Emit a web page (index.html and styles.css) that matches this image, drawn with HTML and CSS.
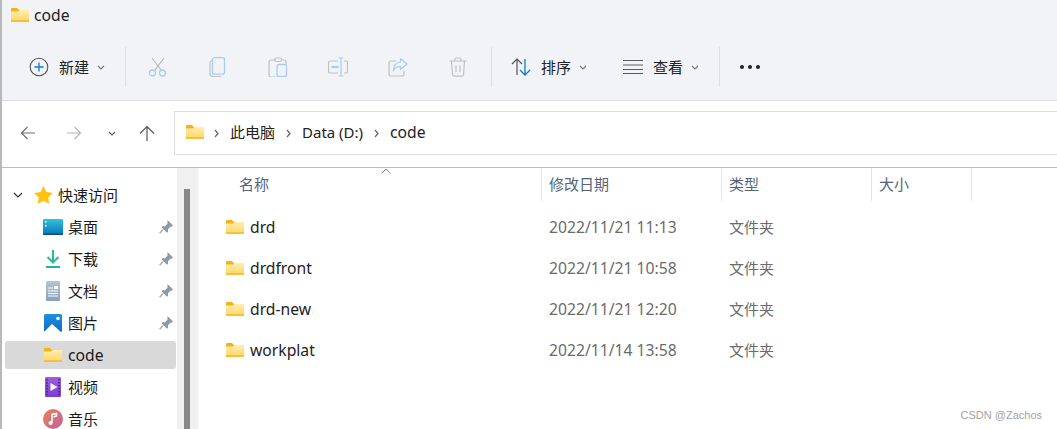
FILE: index.html
```html
<!DOCTYPE html>
<html lang="zh-CN">
<head>
<meta charset="utf-8">
<title>code</title>
<link rel="stylesheet" href="styles.css">
</head>
<body>
<svg class="defs" width="0" height="0" aria-hidden="true">
  <defs>
    <linearGradient id="fg" x1="0" y1="0" x2="0" y2="1"><stop offset="0" stop-color="#ffeeb0"/><stop offset="1" stop-color="#ffd86b"/></linearGradient>
    <linearGradient id="dg" x1="0" y1="0" x2="0" y2="1"><stop offset="0" stop-color="#2fc3dd"/><stop offset="1" stop-color="#0f76b8"/></linearGradient>
    <linearGradient id="dl" x1="0" y1="0" x2="0" y2="1"><stop offset="0" stop-color="#38c08a"/><stop offset="1" stop-color="#1fb5a0"/></linearGradient>
    <linearGradient id="dc" x1="0" y1="0" x2="0" y2="1"><stop offset="0" stop-color="#b4c5d9"/><stop offset="1" stop-color="#86a0bf"/></linearGradient>
    <linearGradient id="pc" x1="0" y1="0" x2="0" y2="1"><stop offset="0" stop-color="#1f8fe0"/><stop offset="1" stop-color="#0f6cc4"/></linearGradient>
    <linearGradient id="vd" x1="0" y1="0" x2="0" y2="1"><stop offset="0" stop-color="#a05ee0"/><stop offset="1" stop-color="#7a3fd0"/></linearGradient>
    <linearGradient id="mu" x1="0" y1="0" x2="1" y2="1"><stop offset="0" stop-color="#e8855a"/><stop offset="1" stop-color="#c0609a"/></linearGradient>
    <symbol id="folder" viewBox="0 0 18 14">
      <path d="M0 1a1 1 0 0 1 1-1h5l2 2h10v12H0z" fill="#f5b31a"/>
      <path d="M0 3.500h7l1.500-1.500H18v10.500H0z" fill="url(#fg)"/>
      <path d="M0 12.500h18V14H0z" fill="#f4bd3a"/>
    </symbol>
    <symbol id="pin" viewBox="0 0 14 14">
      <path d="M8.500 0l5.500 5.500-1.500 1.200-1 0-2.500 2.500 0 2.500-1 1-5.500-5.500 1-1 2.500 0 2.500-2.500 0-1z" fill="#8d9aa5"/>
      <path d="M4 9.500L.7 13.300" stroke="#a9b2ba" stroke-width="1.600" fill="none"/>
    </symbol>
    <symbol id="chev" viewBox="0 0 8 5">
      <path d="M1 1l3 3 3-3" fill="none" stroke="currentColor" stroke-width="1.100"/>
    </symbol>
    <symbol id="crumb" viewBox="0 0 5 9">
      <path d="M1 1l3 3.500-3 3.500" fill="none" stroke="#666" stroke-width="1.300"/>
    </symbol>
  </defs>
</svg>

<div class="window">
  <div class="edge"></div>
  <header class="top">
    <div class="title">
      <svg class="folder"><use href="#folder"/></svg>
      <span class="lat">code</span>
    </div>
    <div class="toolbar">
      <div class="tool tool-new">
        <svg class="ic20" viewBox="0 0 20 20"><circle cx="10" cy="10" r="8.800" fill="none" stroke="#555" stroke-width="1.100"/><path d="M10 5.500v9M5.500 10h9" stroke="#0a7cd8" stroke-width="1.300"/></svg>
        <span class="tool-label">新建</span>
        <svg class="chev"><use href="#chev"/></svg>
      </div>
      <i class="sep"></i>
      <div class="icon-btn"><svg class="ic20" viewBox="0 0 20 20"><path d="M4 1l9 12M16 1L7 13" stroke="#b5b5b5" stroke-width="1.100" fill="none"/><circle cx="4.500" cy="16" r="3" fill="none" stroke="#a9cdf0" stroke-width="1.300"/><circle cx="14.500" cy="16" r="3" fill="none" stroke="#a9cdf0" stroke-width="1.300"/></svg></div>
      <div class="icon-btn"><svg class="ic20" viewBox="0 0 20 20"><path d="M4 3.500C2.500 4 2 5 2 6v10c0 2 1.500 3.500 3.500 3.500H13" fill="none" stroke="#c2c2c2" stroke-width="1.200"/><rect x="4.500" y="0.700" width="12" height="16.500" rx="2" fill="none" stroke="#a9cdf0" stroke-width="1.300"/></svg></div>
      <div class="icon-btn"><svg class="ic20" viewBox="0 0 20 20"><path d="M8 3H3a2 2 0 0 0-2 2v13a2 2 0 0 0 2 2h5M14 3h2a2 2 0 0 1 2 2v2" fill="none" stroke="#c2c2c2" stroke-width="1.200"/><rect x="6.500" y="1" width="7" height="3.500" rx="1.500" fill="none" stroke="#c2c2c2" stroke-width="1.200"/><rect x="9" y="7.500" width="9.500" height="12" rx="1.500" fill="none" stroke="#a9cdf0" stroke-width="1.300"/></svg></div>
      <div class="icon-btn"><svg class="ic20" viewBox="0 0 20 20"><path d="M10 4H2a1.500 1.500 0 0 0-1.500 1.500v9A1.500 1.500 0 0 0 2 16h8M16 4h2a1.500 1.500 0 0 1 1.500 1.500v9A1.500 1.500 0 0 1 18 16h-2" fill="none" stroke="#c2c2c2" stroke-width="1.200"/><path d="M3.500 10h7" stroke="#a9cdf0" stroke-width="2.200"/><path d="M13 1v18M10.500 1h5M10.500 19h5" stroke="#a9cdf0" stroke-width="1.200" fill="none"/></svg></div>
      <div class="icon-btn"><svg class="ic20" viewBox="0 0 20 20"><path d="M8 4H3a2 2 0 0 0-2 2v11a2 2 0 0 0 2 2h11a2 2 0 0 0 2-2v-3" fill="none" stroke="#c2c2c2" stroke-width="1.200"/><path d="M12.500 1.500l6.500 5.500-6.500 5.500V9.500C9 9.500 6.500 11 5.500 14c0-5 2.500-8.500 7-9z" fill="none" stroke="#a9cdf0" stroke-width="1.200" stroke-linejoin="round"/></svg></div>
      <div class="icon-btn"><svg class="ic20" viewBox="0 0 20 20"><path d="M1.500 4h17M7 4V2.500A1.500 1.500 0 0 1 8.500 1h3A1.500 1.500 0 0 1 13 2.500V4M3.500 4l1 13.500A1.800 1.800 0 0 0 6.300 19.200h7.400a1.800 1.800 0 0 0 1.800-1.700L16.500 4M8 8.500v6.500M12 8.500v6.500" fill="none" stroke="#c2c2c2" stroke-width="1.200"/></svg></div>
      <i class="sep sep-b"></i>
      <div class="tool tool-sort">
        <svg class="ic20" viewBox="0 0 20 20"><path d="M6 18V2M1 7l5-5 5 5" fill="none" stroke="#555" stroke-width="1.200"/><path d="M14 2v16M9 13l5 5 5-5" fill="none" stroke="#0a7cd8" stroke-width="1.300"/></svg>
        <span class="tool-label">排序</span>
        <svg class="chev"><use href="#chev"/></svg>
      </div>
      <div class="tool tool-view">
        <svg class="ic20" viewBox="0 0 20 20"><path d="M0 3.500h20M0 8h20M0 12.500h20M0 16.500h20" stroke="#5c5c5c" stroke-width="1.200"/></svg>
        <span class="tool-label">查看</span>
        <svg class="chev"><use href="#chev"/></svg>
      </div>
      <i class="sep sep-c"></i>
      <div class="dots"><b></b><b></b><b></b></div>
    </div>
  </header>

  <nav class="navbar">
    <svg class="nav-ic back" viewBox="0 0 16 14"><path d="M15 7H1.500M7.500 1l-6 6 6 6" fill="none" stroke="#6e6e6e" stroke-width="1.200"/></svg>
    <svg class="nav-ic fwd" viewBox="0 0 16 14"><path d="M1 7h13.500M8.500 1l6 6-6 6" fill="none" stroke="#b4b4b4" stroke-width="1.200"/></svg>
    <svg class="chev nav-chev"><use href="#chev"/></svg>
    <svg class="nav-up" viewBox="0 0 16 16"><path d="M8 16V1.500M1 8.500l7-7 7 7" fill="none" stroke="#555" stroke-width="1.200"/></svg>
    <div class="address">
      <svg class="folder"><use href="#folder"/></svg>
      <svg class="crumb"><use href="#crumb"/></svg>
      <span class="crumb-text">此电脑</span>
      <svg class="crumb"><use href="#crumb"/></svg>
      <span class="crumb-text">Data (D:)</span>
      <svg class="crumb"><use href="#crumb"/></svg>
      <span class="crumb-text lat">code</span>
    </div>
  </nav>

  <main class="main">
    <aside class="side">
      <ul class="tree">
        <li class="tree-row head">
          <svg class="head-chev" viewBox="0 0 10 6"><path d="M1 1l4 4 4-4" fill="none" stroke="#333" stroke-width="1.200"/></svg>
          <svg class="star" viewBox="0 0 20 19"><path d="M10 0l3 6.400 7 .9-5.100 4.800 1.300 6.900L10 15.600 3.800 19l1.300-6.900L0 7.300l7-.9z" fill="#ffc20e"/></svg>
          <span>快速访问</span>
        </li>
        <li class="tree-row">
          <svg class="tree-ic" viewBox="0 0 20 16"><rect width="20" height="15.500" rx="1" fill="url(#dg)"/><rect y="14.500" width="20" height="1.500" fill="#0d4f80"/><rect x="2" y="2" width="1.500" height="1.500" fill="#fff"/><rect x="2" y="6" width="1.500" height="1.500" fill="#fff"/></svg>
          <span>桌面</span>
          <svg class="pin"><use href="#pin"/></svg>
        </li>
        <li class="tree-row">
          <svg class="tree-ic" viewBox="0 0 20 20"><path d="M10 1v12M4.500 8l5.500 5.500L15.500 8" fill="none" stroke="#2cbb96" stroke-width="2"/><path d="M3 18h14" stroke="#1fb5a0" stroke-width="2"/></svg>
          <span>下载</span>
          <svg class="pin"><use href="#pin"/></svg>
        </li>
        <li class="tree-row">
          <svg class="tree-ic" viewBox="0 0 20 20"><rect x="3" width="14" height="20" rx="1" fill="url(#dc)"/><path d="M5 7h5M5 10h10M5 12.500h10M5 15h10" stroke="#fff" stroke-width="1"/><rect x="11" y="5" width="4" height="3" fill="#fff"/></svg>
          <span>文档</span>
          <svg class="pin"><use href="#pin"/></svg>
        </li>
        <li class="tree-row">
          <svg class="tree-ic" viewBox="0 0 20 20"><rect x="1" y="1" width="18" height="18" rx="1.500" fill="url(#pc)"/><path d="M1 19l8-8 9 8z" fill="#fff"/><circle cx="15" cy="5.500" r="1.800" fill="#fff"/></svg>
          <span>图片</span>
          <svg class="pin"><use href="#pin"/></svg>
        </li>
        <li class="tree-row active">
          <svg class="folder"><use href="#folder"/></svg>
          <span class="lat">code</span>
        </li>
        <li class="tree-row">
          <svg class="tree-ic" viewBox="0 0 20 20"><rect x="2" width="16" height="20" rx="1" fill="url(#vd)"/><path d="M7.500 6l7 4-7 4z" fill="#fff"/><path d="M4 2v16M16 2v16" stroke="#3d1d8c" stroke-width="1.500" stroke-dasharray="1.500 1.500"/></svg>
          <span>视频</span>
        </li>
        <li class="tree-row">
          <svg class="tree-ic" viewBox="0 0 20 20"><circle cx="10" cy="10" r="10" fill="url(#mu)"/><path d="M9 14V5.500l4.500-1V7L10.500 8" fill="none" stroke="#fff" stroke-width="1.600"/><circle cx="7.500" cy="14" r="2" fill="#fff"/></svg>
          <span>音乐</span>
        </li>
      </ul>
      <div class="track"><div class="thumb"></div></div>
    </aside>

    <section class="list">
      <div class="cols col-head">
        <div class="col-h col-name">名称<svg class="sort-caret" viewBox="0 0 10 6"><path d="M.5 5.500L5 1l4.500 4.500" fill="none" stroke="#888" stroke-width="1"/></svg></div>
        <div class="col-h col-date">修改日期</div>
        <div class="col-h col-type">类型</div>
        <div class="col-h col-size">大小</div>
      </div>
      <div class="cols row">
        <div class="cell-name"><svg class="folder"><use href="#folder"/></svg><span>drd</span></div>
        <div class="cell cell-date">2022/11/21 11:13</div>
        <div class="cell">文件夹</div>
      </div>
      <div class="cols row">
        <div class="cell-name"><svg class="folder"><use href="#folder"/></svg><span>drdfront</span></div>
        <div class="cell cell-date">2022/11/21 10:58</div>
        <div class="cell">文件夹</div>
      </div>
      <div class="cols row">
        <div class="cell-name"><svg class="folder"><use href="#folder"/></svg><span>drd-new</span></div>
        <div class="cell cell-date">2022/11/21 12:20</div>
        <div class="cell">文件夹</div>
      </div>
      <div class="cols row">
        <div class="cell-name"><svg class="folder"><use href="#folder"/></svg><span>workplat</span></div>
        <div class="cell cell-date">2022/11/14 13:58</div>
        <div class="cell">文件夹</div>
      </div>
    </section>
  </main>
  <div class="watermark">CSDN @Zachos</div>
</div>
</body>
</html>
```

FILE: styles.css
```css
* { box-sizing: border-box; }
html, body { margin: 0; height: 100%; overflow: hidden; }
body {
  background: #fff;
  color: #1a1a1a;
  font: 15px/20px "Noto Sans", "Noto Sans CJK SC", sans-serif;
}
.defs { position: absolute; }
svg { display: block; flex: none; }
ul { list-style: none; margin: 0; padding: 0; }
.lat { font-size: 15.700px; }

.window {
  position: relative;
  height: 429px;
  border-left: 2px solid #b9b9b9;
  display: flex;
  flex-direction: column;
  overflow: hidden;
}
.edge {
  position: absolute;
  left: -2px;
  top: 14px;
  width: 2px;
  height: 40px;
  background: linear-gradient(#666 0 3px, transparent 3px 8px, #666 8px 10px, transparent 10px 16px, #666 16px 19px, transparent 19px 32px, #666 32px 38px, #c98a2e 38px 40px);
}

.folder { width: 18px; height: 14px; }

/* top */
.top { background: #f1f3f6; border-bottom: 1px solid #dcdcdc; height: 101px; flex: none; }
.title {
  height: 30px;
  padding-left: 9px;
  display: flex;
  align-items: center;
  gap: 5px;
  color: #222;
}
.toolbar {
  height: 70px;
  padding-top: 4px;
  display: flex;
  align-items: center;
}
.ic20 { width: 20px; height: 20px; }
.tool { display: flex; align-items: center; }
.tool-new { padding-left: 27px; width: 123px; }
.tool-label { margin-left: 10px; font-size: 15px; color: #222; width: 30px; white-space: nowrap; }
.chev { width: 8px; height: 5px; margin-left: 8px; color: #777; }
.sep { width: 1px; height: 40px; background: #dedfe2; flex: none; }
.sep-b { margin-left: 3px; }
.sep-c { margin-left: 20px; }
.icon-btn { width: 60px; display: flex; justify-content: center; flex: none; }
.sep + .icon-btn { margin-left: 2px; }
.tool-sort { margin-left: 19px; }
.tool-view { margin-left: 36px; }
.dots { display: flex; gap: 4px; margin-left: 20px; }
.dots b { width: 4px; height: 4px; border-radius: 50%; background: #222; }

/* nav */
.navbar {
  height: 67px;
  background: #fff;
  border-bottom: 1px solid #bdbdbd;
  display: flex;
  align-items: flex-start;
  padding-top: 10px;
  flex: none;
}
.nav-ic { width: 16px; height: 14px; margin-top: 15px; }
.back { margin-left: 18px; }
.fwd { margin-left: 30px; }
.nav-chev { margin: 20px 0 0 26px; color: #555; }
.nav-up { width: 16px; height: 16px; margin: 14px 0 0 23px; }
.address {
  margin-left: 19px;
  width: 900px;
  height: 44px;
  background: #fff;
  border: 1px solid #dcdcdc;
  border-right: 0;
  display: flex;
  align-items: center;
  padding: 0 0 2px 11px;
  color: #222;
}
.crumb { width: 5px; height: 9px; margin: 2px 11px 0 11px; }
.folder + .crumb { margin-left: 10px; }

/* main */
.main { flex: 1; display: flex; min-height: 0; }
.side { width: 195px; flex: none; display: flex; }
.tree { width: 175px; padding: 13px 1px 0 3px; flex: none; }
.tree-row {
  height: 28px;
  margin-bottom: 4px;
  border-radius: 3px;
  display: flex;
  align-items: center;
  padding-left: 38px;
  color: #1a1a1a;
  white-space: nowrap;
}
.tree-row.head { padding-left: 8px; }
.tree-row.active { background: #d9d9d9; padding-left: 39px; }
.tree-row.active span { margin-left: 6px; }
.tree-row > span { margin-left: 5px; }
.head-chev { width: 10px; height: 6px; }
.star { width: 19px; height: 18px; margin-left: 11px; }
.star + span { margin-left: 5px; }
.tree-ic { width: 20px; height: 20px; }
.pin { width: 14px; height: 14px; margin-left: auto; margin-right: 3px; }
.track { width: 20px; background: #f0f0f0; padding: 21px 7px 0; flex: none; }
.thumb { width: 6px; height: 300px; background: #888; }

.list { flex: 1; border-left: 2px solid #f5f5f5; min-width: 0; }
.cols { display: grid; grid-template-columns: 343px 180px 150px 100px; }
.col-head { height: 33px; }
.col-h {
  position: relative;
  border-right: 1px solid #e5e5e5;
  padding-left: 7px;
  line-height: 33px;
  color: #566479;
  font-size: 15px;
}
.col-h.col-name { padding-left: 40px; }
.sort-caret { position: absolute; left: 182px; top: 0; width: 10px; height: 6px; }
.row { height: 41px; align-items: center; color: #6b6b6b; }
.row:nth-child(2) { margin-top: 5px; }
.cell { padding-left: 7px; white-space: nowrap; }
.cell-date { font-size: 15.700px; }
.cell-name { padding-left: 27px; display: flex; align-items: center; gap: 6px; color: #222; font-size: 15.700px; }

.watermark {
  position: absolute;
  right: 15px;
  bottom: 7px;
  font: 11px/14px "Liberation Sans", sans-serif;
  color: #a3a3a3;
}
```
